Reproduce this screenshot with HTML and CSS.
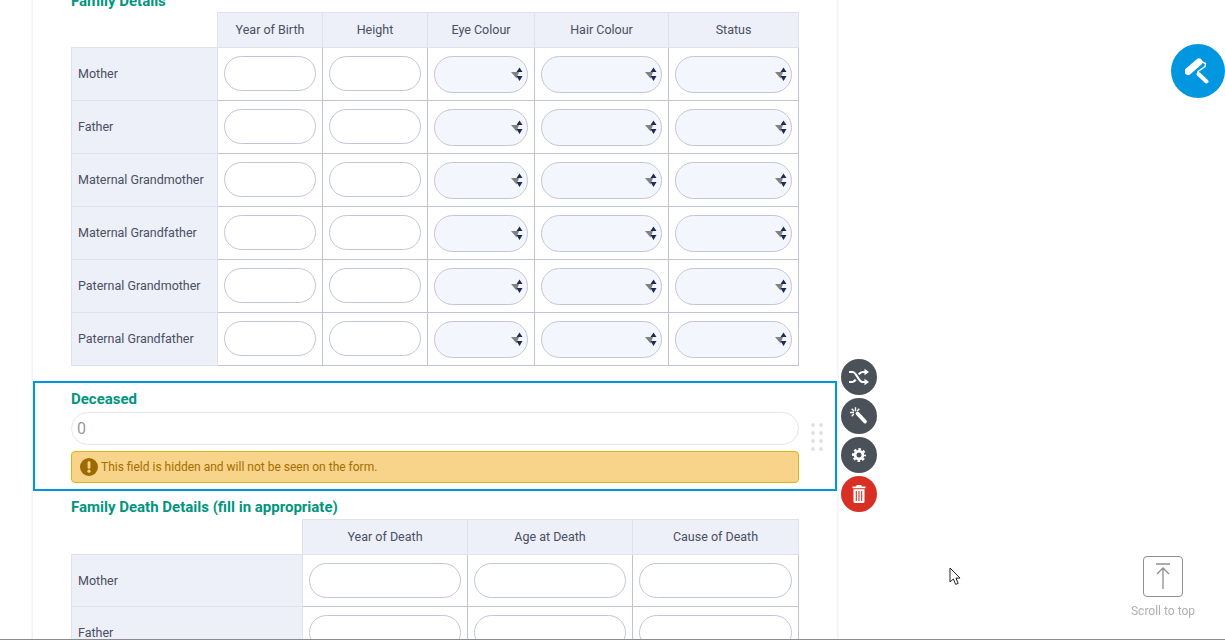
FILE: index.html
```html
<!DOCTYPE html>
<html lang="en">
<head>
<meta charset="utf-8">
<title>Form builder</title>
<link rel="stylesheet" href="styles.css">
</head>
<body>
<div class="page">
  <main class="card">
    <section class="block block-family">
      <h3 class="label">Family Details</h3>
      <table class="grid grid-family">
        <colgroup><col class="c146"><col class="c105"><col class="c105"><col class="c107"><col class="c134"><col class="c130"></colgroup>
        <thead><tr><th class="blank"></th><th>Year of Birth</th><th>Height</th><th>Eye Colour</th><th>Hair Colour</th><th>Status</th></tr></thead>
        <tbody>
          <tr><th>Mother</th><td><input class="pill"></td><td><input class="pill"></td><td><select class="drop"></select></td><td><select class="drop"></select></td><td><select class="drop"></select></td></tr>
          <tr><th>Father</th><td><input class="pill"></td><td><input class="pill"></td><td><select class="drop"></select></td><td><select class="drop"></select></td><td><select class="drop"></select></td></tr>
          <tr><th>Maternal Grandmother</th><td><input class="pill"></td><td><input class="pill"></td><td><select class="drop"></select></td><td><select class="drop"></select></td><td><select class="drop"></select></td></tr>
          <tr><th>Maternal Grandfather</th><td><input class="pill"></td><td><input class="pill"></td><td><select class="drop"></select></td><td><select class="drop"></select></td><td><select class="drop"></select></td></tr>
          <tr><th>Paternal Grandmother</th><td><input class="pill"></td><td><input class="pill"></td><td><select class="drop"></select></td><td><select class="drop"></select></td><td><select class="drop"></select></td></tr>
          <tr><th>Paternal Grandfather</th><td><input class="pill"></td><td><input class="pill"></td><td><select class="drop"></select></td><td><select class="drop"></select></td><td><select class="drop"></select></td></tr>
        </tbody>
      </table>
    </section>

    <section class="selected">
      <h3 class="label">Deceased</h3>
      <input class="wide" value="0">
      <div class="alert">
        <svg class="alert-icon" viewBox="0 0 18 18" width="18" height="18"><circle cx="9" cy="9" r="9" fill="#9c6a00"/><rect x="7.6" y="3.2" width="2.8" height="7.6" rx="1.2" fill="#f8d38a"/><circle cx="9" cy="13.2" r="1.6" fill="#f8d38a"/></svg>
        <span>This field is hidden and will not be seen on the form.</span>
      </div>
      <div class="handle"><i></i><i></i><i></i><i></i><i></i><i></i><i></i><i></i></div>
      <div class="tools">
        <button class="tool">
          <svg viewBox="0 0 20 20" width="20" height="20" fill="none" stroke="#fff" stroke-width="2.2"><path d="M0 5h3.500c4 0 6 10 10 10H16M0 15h3.500c1.300 0 2.300-1 3.200-2.300M9.800 7.300C10.800 6 11.800 5 13.500 5H16"/><path d="M15.500 1.800 20 5l-4.500 3.200zM15.500 11.800 20 15l-4.500 3.200z" fill="#fff" stroke="none"/></svg>
        </button>
        <button class="tool">
          <svg viewBox="0 0 20 20" width="20" height="20" fill="none" stroke="#fff"><path d="M8.500 7.500 16 15.500" stroke-width="3.800" stroke-linecap="round"/><path d="M1 6.500h4M6.500 1.200v4M2.700 2.700l2.200 2.200M2.700 10.300l2.200-2.200M10.300 2.700 8.100 4.900" stroke-width="1.400"/></svg>
        </button>
        <button class="tool">
          <svg viewBox="0 0 20 20" width="20" height="20" fill="none" stroke="#fff"><circle cx="10" cy="10" r="3.900" stroke-width="2.800"/><circle cx="10" cy="10" r="6" stroke-width="2" stroke-dasharray="2.600 2.112" stroke-dashoffset="1.300"/></svg>
        </button>
        <button class="tool tool-red">
          <svg viewBox="0 0 20 20" width="20" height="20" fill="#fff"><path d="M7.800 1h4.400l.7 1.500H16.500v1.700H3.500V2.500h3.600zM4.500 5.200h11V17.500A1.500 1.500 0 0 1 14 19H6A1.500 1.500 0 0 1 4.500 17.500z"/><path d="M7.300 7v10M10 7v10M12.700 7v10" stroke="#d93025" stroke-width="1.100"/></svg>
        </button>
      </div>
    </section>

    <section class="block block-death">
      <h3 class="label">Family Death Details (fill in appropriate)</h3>
      <table class="grid grid-death">
        <colgroup><col class="c231"><col class="c165"><col class="c165"><col class="c166"></colgroup>
        <thead><tr><th class="blank"></th><th>Year of Death</th><th>Age at Death</th><th>Cause of Death</th></tr></thead>
        <tbody>
          <tr><th>Mother</th><td><input class="pill"></td><td><input class="pill"></td><td><input class="pill"></td></tr>
          <tr><th>Father</th><td><input class="pill"></td><td><input class="pill"></td><td><input class="pill"></td></tr>
        </tbody>
      </table>
    </section>
  </main>
</div>

<button class="roller">
  <svg viewBox="0 0 26 26" width="26" height="26" fill="none" stroke="#fff"><path d="M3 13.500 14 4" stroke-width="7" stroke-linecap="round"/><path d="M16 3.500 20.500 5.500 20 8.500 13 13.500V16" stroke-width="1.400"/><path d="M13.500 16 21.500 23.500" stroke-width="4" stroke-linecap="round"/></svg>
</button>

<svg class="cursor" viewBox="0 0 13 19" width="13" height="19"><path d="M1 1v14l3.400-3 2.200 5.400 2.600-1-2.300-5.300H11z" fill="#fff" stroke="#222" stroke-width="1"/></svg>

<a class="to-top">
  <span class="to-top-box">
    <svg viewBox="0 0 38 39" width="38" height="39" fill="none" stroke="#8f8f8f" stroke-width="1.300"><path d="M12 7h14M19 32V11M13 17l6-6 6 6"/></svg>
  </span>
  <span class="to-top-text">Scroll to top</span>
</a>

<div class="edge"></div>
</body>
</html>
```
FILE: styles.css
```css
* { box-sizing: border-box; }
html, body { margin: 0; height: 640px; overflow: hidden; background: #fff; }
body { font-family: Roboto, "Liberation Sans", sans-serif; color: #4a4e62; font-size: 12.500px; }

.page { height: 640px; overflow: hidden; padding-left: 32px; }
.card {
  width: 806px;
  margin-top: -9px;
  border-left: 1px solid #f2f2f2;
  border-right: 1px solid #f2f2f2;
  box-shadow: -1px 0 0 #f8f8f8, 1px 0 0 #f8f8f8;
}

.block { padding: 0 38px; }
.block-family { padding-bottom: 15px; }
.block-death { padding-top: 6px; }

.label {
  margin: 0;
  font-size: 15px;
  line-height: 20px;
  font-weight: 700;
  color: #00957e;
}
.block-family .label { height: 21px; }
.block-death .label { height: 22px; }

.grid { border-collapse: collapse; table-layout: fixed; width: 727px; }
.grid th, .grid td { border: 1px solid #bfc3d6; padding: 0; text-align: center; }
.grid td { vertical-align: top; padding-top: 8px; }
.grid th { font-weight: 400; background: #edf0f8; border-color: #dfe2ee; color: #4a4e62; padding-bottom: 2px; }
.grid thead th { height: 35px; }
.grid tbody th { text-align: left; padding-left: 6px; }
.grid th.blank { background: #fff; border: 0; }
.grid-family tbody tr { height: 53px; }
.grid-death tbody tr { height: 52px; }
.grid-death tbody th { padding-bottom: 0; }

.c146 { width: 146px; }
.c105 { width: 105px; }
.c107 { width: 107px; }
.c134 { width: 134px; }
.c130 { width: 130px; }
.c231 { width: 231px; }
.c165 { width: 165px; }
.c166 { width: 166px; }

.pill {
  display: block;
  width: calc(100% - 12px);
  height: 35px;
  margin-left: 6px;
  border: 1px solid #c3c6d8;
  border-radius: 17.500px;
  background: #fff;
  outline: 0;
  font: inherit;
}
.drop {
  display: block;
  width: calc(100% - 12px);
  height: 37px;
  margin-left: 6px;
  border: 1px solid #c3c6d8;
  border-radius: 18.500px;
  appearance: none;
  -webkit-appearance: none;
  outline: 0;
  background-color: #f3f6fc;
  background-image: url("data:image/svg+xml,%3Csvg xmlns='http://www.w3.org/2000/svg' width='13' height='15'%3E%3Cpath d='M0 5h8L5.500 11.500z' fill='%23808080'/%3E%3Cpath d='M8.500 .5l3 4.500h-6zM5.500 9h6l-3 5z' fill='%231d2a55'/%3E%3C/svg%3E");
  background-repeat: no-repeat;
  background-position: right 3px center;
}

.selected {
  position: relative;
  height: 110px;
  padding: 6px 36px 0;
  border: 2px solid #0096db;
}
.wide {
  display: block;
  width: 728px;
  height: 33px;
  margin-top: 3px;
  padding: 0 5px;
  border: 1px solid #e3e4f0;
  border-radius: 17px;
  outline: 0;
  background: #fff;
  color: #9a9a9a;
  font: 16px Roboto, sans-serif;
}
.alert {
  display: flex;
  align-items: center;
  gap: 3px;
  width: 728px;
  height: 32px;
  margin-top: 6px;
  padding-left: 8px;
  border: 1px solid #dcb714;
  border-radius: 4px;
  background: #f8d38a;
  color: #a36f00;
  font-size: 12px;
}
.alert-icon { flex: none; }

.handle {
  position: absolute;
  left: 776px;
  top: 40px;
  display: grid;
  grid-template-columns: 4px 4px;
  grid-auto-rows: 4px;
  gap: 4px;
}
.handle i { display: block; border-radius: 50%; background: #e2e2e2; }

.tools {
  position: absolute;
  left: 806px;
  top: -24px;
  display: flex;
  flex-direction: column;
  gap: 3px;
}
.tool {
  display: flex;
  align-items: center;
  justify-content: center;
  width: 36px;
  height: 36px;
  padding: 0;
  border: 0;
  border-radius: 50%;
  background: #4a5159;
}
.tool-red { background: #d93025; }

.roller {
  position: fixed;
  left: 1171px;
  top: 44px;
  display: flex;
  align-items: center;
  justify-content: center;
  width: 54px;
  height: 54px;
  padding: 0;
  border: 0;
  border-radius: 50%;
  background: #0096e0;
}

.cursor { position: fixed; left: 949px; top: 567px; }

.to-top {
  position: fixed;
  left: 1123px;
  top: 556px;
  width: 80px;
  display: flex;
  flex-direction: column;
  align-items: center;
}
.to-top-box {
  display: block;
  width: 40px;
  height: 41px;
  border: 1px solid #8f8f8f;
  border-radius: 4px;
}
.to-top-box svg { display: block; }
.to-top-text { margin-top: 6px; font-size: 12px; line-height: 16px; color: #b0b0b0; white-space: nowrap; }

.edge { position: fixed; left: 0; right: 0; bottom: 0; height: 1px; background: #8c8c8c; }
```
